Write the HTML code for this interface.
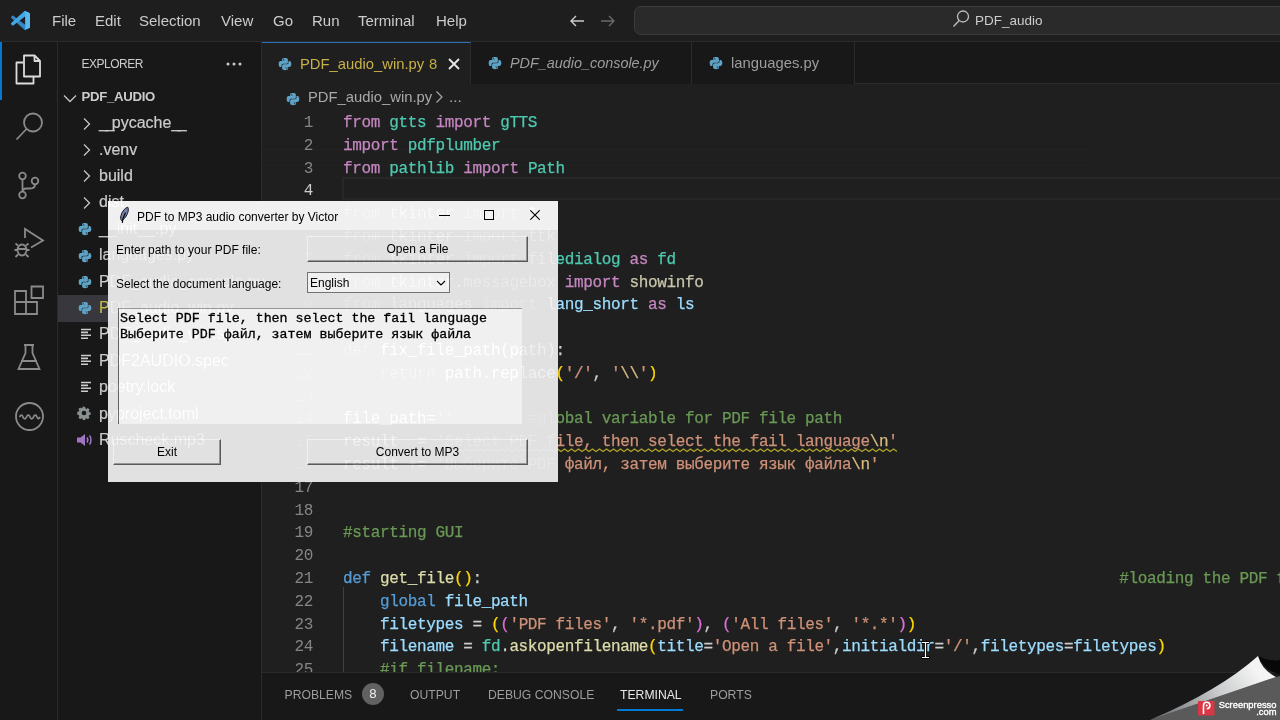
<!DOCTYPE html>
<html><head><meta charset="utf-8">
<style>
*{margin:0;padding:0;box-sizing:border-box}
html,body{width:1280px;height:720px;overflow:hidden;background:#1f1f1f;font-family:"Liberation Sans",sans-serif}
.abs{position:absolute}
#title{left:0;top:0;width:1280px;height:42px;background:#1e1e1e;border-bottom:1px solid #2b2b2b}
.menu{position:absolute;top:12px;font-size:15px;color:#cccccc;line-height:18px}
#act{left:0;top:42px;width:58px;height:678px;background:#181818;border-right:1px solid #2b2b2b}
#side{left:58px;top:42px;width:204px;height:678px;background:#181818;border-right:1px solid #2b2b2b}
#tabs{left:262px;top:42px;width:1018px;height:42px;background:#181818;border-bottom:1px solid #2b2b2b}
.tab{position:absolute;top:0;height:42px;background:#181818;border-right:1px solid #2b2b2b}
.tabtxt{position:absolute;top:12px;font-size:14.8px;line-height:18px;color:#9d9d9d;white-space:nowrap}
.row{position:absolute;left:0;width:203px;height:26px}
.rtxt{position:absolute;top:4px;font-size:16px;-webkit-text-stroke:0.2px currentColor;line-height:18px;color:#cccccc;white-space:nowrap}
#code{left:262px;top:108.6px;width:1018px;height:563px;overflow:hidden}
.ln{position:absolute;left:0;width:51px;text-align:right;font-family:"Liberation Mono",monospace;font-size:16px;letter-spacing:-0.36px;color:#858585;height:23px;line-height:23px}
.cl{position:absolute;left:81px;font-family:"Liberation Mono",monospace;font-size:16px;letter-spacing:-0.36px;color:#cccccc;white-space:pre;height:23px;line-height:23px}
.cl{-webkit-text-stroke:0.25px currentColor}
.k{color:#c586c0}.m{color:#4ec9b0}.d{color:#569cd6}.f{color:#dcdcaa}.v{color:#9cdcfe}.s{color:#ce9178}.c{color:#6a9955}.y{color:#ffd700}.p{color:#da70d6}.w{color:#d4d4d4}.e{color:#d7ba7d}
i{font-style:normal}
#panel{left:262px;top:672px;width:1018px;height:48px;background:#181818;border-top:1px solid #2b2b2b}
.ptab{position:absolute;top:14px;font-size:12.2px;margin-top:-2px;line-height:16px;color:#9d9d9d;white-space:nowrap}
.btn{background:#f0f0f0;border-top:1px solid #ffffff;border-left:1px solid #ffffff;border-right:1px solid #5f5f5f;border-bottom:1px solid #5f5f5f;box-shadow:inset -1px -1px 0 #a0a0a0;font-size:12px;line-height:24px;text-align:center;white-space:nowrap}
</style></head><body>
<div id="title" class="abs">
<svg class="abs" style="left:11px;top:11px" width="19" height="19" viewBox="0 0 100 100"><path fill="#2f86c8" d="M96.5 10.8 75.9 0.9c-2.4-1.2-5.2-0.7-7.1 1.2L29.5 38 12.4 25c-1.6-1.2-3.8-1.1-5.3 0.2L1.6 30.3c-1.8 1.7-1.8 4.5 0 6.2L16.4 50 1.6 63.5c-1.8 1.7-1.8 4.5 0 6.2l5.5 5c1.5 1.4 3.7 1.5 5.3 0.2L29.5 62l39.3 35.9c1.9 1.9 4.7 2.4 7.1 1.2l20.6-9.9c2.2-1 3.5-3.2 3.5-5.6V16.4c0-2.4-1.4-4.6-3.5-5.6zM75 72.7 45.2 50 75 27.3z"/><path fill="#45a6e6" d="M96.5 10.8 75.9 0.9c-2.4-1.2-5.2-0.7-7.1 1.2L1.6 63.5c-1.8 1.7-1.8 4.5 0 6.2l5.5 5c1.5 1.4 3.7 1.5 5.3 0.2L93.4 13.5C96.1 11.4 100 13.3 100 16.7v-0.2c0-2.4-1.4-4.6-3.5-5.7z"/><path fill="#5ab8f0" d="M75.9 99.1c-2.4 1.2-5.2 0.7-7.1-1.2C71.1 100.2 75 98.6 75 95.3V4.7c0-3.3-3.9-4.9-6.2-2.6 1.9-1.9 4.7-2.4 7.1-1.2l20.6 9.9c2.2 1 3.5 3.2 3.5 5.6v67.2c0 2.4-1.4 4.6-3.5 5.6z"/></svg>
<div class="menu" style="left:52px">File</div>
<div class="menu" style="left:95px">Edit</div>
<div class="menu" style="left:139px">Selection</div>
<div class="menu" style="left:221px">View</div>
<div class="menu" style="left:273px">Go</div>
<div class="menu" style="left:312px">Run</div>
<div class="menu" style="left:358px">Terminal</div>
<div class="menu" style="left:436px">Help</div>
<svg class="abs" style="left:568px;top:12px" width="18" height="18" viewBox="0 0 18 18"><path d="M16 9H3M8 4 3 9l5 5" fill="none" stroke="#cccccc" stroke-width="1.4"/></svg>
<svg class="abs" style="left:599px;top:12px" width="18" height="18" viewBox="0 0 18 18"><path d="M2 9h13M10 4l5 5-5 5" fill="none" stroke="#6b6b6b" stroke-width="1.4"/></svg>
<div class="abs" style="left:634px;top:6px;width:700px;height:29px;border:1px solid #3c3c3c;border-radius:7px;background:#2a2a2a"></div>
<svg class="abs" style="left:950.5px;top:9px" width="20" height="20" viewBox="0 0 20 20"><circle cx="12" cy="7.5" r="5.5" fill="none" stroke="#bdbdbd" stroke-width="1.3"/><path d="M8.2 11.5 2.5 17.5" stroke="#bdbdbd" stroke-width="1.4"/></svg>
<div class="abs" style="left:975px;top:13px;font-size:13.5px;line-height:16px;color:#cccccc">PDF_audio</div>
</div>
<div id="act" class="abs">
<div class="abs" style="left:0;top:0;width:2px;height:58px;background:#0078d4"></div>
<svg class="abs" style="left:0;top:0" width="57" height="420" viewBox="0 42 57 420">
<g fill="none" stroke="#dcdcdc" stroke-width="1.8" stroke-linejoin="round">
<path d="M23.5 62.5h-7v21h17v-6.5" stroke-linejoin="round"/>
<path d="M24 55.5h10.5l5.5 5.5v15.5h-16z"/><path d="M34.5 55.5v5.5h5.5"/>
</g>
<g fill="none" stroke="#8a8a8a" stroke-width="1.8">
<circle cx="33" cy="122.5" r="9"/><path d="M26.5 129 16.5 139.5"/>
<circle cx="22.5" cy="176" r="3.3"/><circle cx="35" cy="181" r="3.3"/><circle cx="22.5" cy="195" r="3.3"/>
<path d="M22.5 179.5v12M35 184.5c0 3-2 4-5 4h-3.5c-2.5 0-4 1.5-4 3.5"/>
<path d="M25 238v-9l18 11.5-12 7"/>
<ellipse cx="22" cy="250" rx="4.5" ry="5.5"/><path d="M17.5 250h-3M26.5 250h3M18 245.5l-2.5-2M26 245.5l2.5-2M18 254.5l-2.5 2.5M26 254.5l2.5 2.5M17.5 249h9"/>
<path d="M15 291h11v11h11v12H15zM15 302h11v12M31.5 286.5h11.5v11.5H31.5z"/>
<path d="M24 345h10M25.5 345v8l-7 16h21l-7-16v-8M21 361h16"/>
<circle cx="29.5" cy="416.5" r="13.5"/><path d="M19.5 417c1.5-2.5 2.5-2.5 3.5 0s2.5 2.5 3.5 0 2.5-2.5 3.5 0 2.5 2.5 3.5 0 2.5-2.5 3.5 0 2 2 3 0"/>
</g></svg>
</div>
<div id="side" class="abs">
<div class="abs" style="left:23.5px;top:14px;font-size:12px;line-height:16px;color:#cccccc;letter-spacing:-0.5px">EXPLORER</div>
<div class="abs" style="left:168px;top:19px;height:4px;line-height:0;color:#cccccc"><svg width="16" height="4" viewBox="0 0 16 4"><circle cx="2" cy="2" r="1.5" fill="#cccccc"/><circle cx="8" cy="2" r="1.5" fill="#cccccc"/><circle cx="14" cy="2" r="1.5" fill="#cccccc"/></svg></div>
<svg class="abs" style="left:5px;top:51px" width="14" height="10" viewBox="0 0 14 10"><path d="M1 2.5 7 8.5 13 2.5" fill="none" stroke="#c5c5c5" stroke-width="1.3"/></svg>
<div class="abs" style="left:23.5px;top:47px;font-size:13.2px;line-height:16px;font-weight:bold;color:#cccccc;letter-spacing:-0.3px">PDF_AUDIO</div>
<svg class="abs" style="left:24px;top:75px" width="10" height="14" viewBox="0 0 10 14"><path d="M2 1.5 7.5 7 2 12.5" fill="none" stroke="#c5c5c5" stroke-width="1.3"/></svg>
<div class="rtxt" style="left:41px;top:72.1px;color:#cccccc"><span style="letter-spacing:-2.5px">__</span>pycache<span style="letter-spacing:-2.5px">_</span>_</div>
<svg class="abs" style="left:24px;top:101px" width="10" height="14" viewBox="0 0 10 14"><path d="M2 1.5 7.5 7 2 12.5" fill="none" stroke="#c5c5c5" stroke-width="1.3"/></svg>
<div class="rtxt" style="left:41px;top:98.5px;color:#cccccc">.venv</div>
<svg class="abs" style="left:24px;top:127px" width="10" height="14" viewBox="0 0 10 14"><path d="M2 1.5 7.5 7 2 12.5" fill="none" stroke="#c5c5c5" stroke-width="1.3"/></svg>
<div class="rtxt" style="left:41px;top:124.9px;color:#cccccc">build</div>
<svg class="abs" style="left:24px;top:154px" width="10" height="14" viewBox="0 0 10 14"><path d="M2 1.5 7.5 7 2 12.5" fill="none" stroke="#c5c5c5" stroke-width="1.3"/></svg>
<div class="rtxt" style="left:41px;top:151.3px;color:#cccccc">dist</div>
<svg class="abs" style="left:19.5px;top:180px" width="14" height="14" viewBox="0 0 16 16"><path fill="#5ea3c6" d="M7.9 1C4.3 1 4.5 2.6 4.5 2.6v1.6h3.5v.5H3.1S.8 4.4.8 8c0 3.6 2 3.5 2 3.5h1.2V9.8s-.1-2 2-2h3.4s1.9 0 1.9-1.9V2.9S11.6 1 7.9 1zM6 2.1a.6.6 0 1 1 0 1.2.6.6 0 0 1 0-1.2z"/><path fill="#5ea3c6" d="M8.1 15c3.6 0 3.4-1.6 3.4-1.6v-1.6H8v-.5h4.9s2.3.3 2.3-3.3c0-3.6-2-3.5-2-3.5h-1.2v1.7s.1 2-2 2H6.6s-1.9 0-1.9 1.9v3.1S4.4 15 8.1 15zm1.9-1.1a.6.6 0 1 1 0-1.2.6.6 0 0 1 0 1.2z"/></svg>
<div class="rtxt" style="left:41px;top:177.7px;color:#cccccc">__init__.py</div>
<svg class="abs" style="left:19.5px;top:207px" width="14" height="14" viewBox="0 0 16 16"><path fill="#5ea3c6" d="M7.9 1C4.3 1 4.5 2.6 4.5 2.6v1.6h3.5v.5H3.1S.8 4.4.8 8c0 3.6 2 3.5 2 3.5h1.2V9.8s-.1-2 2-2h3.4s1.9 0 1.9-1.9V2.9S11.6 1 7.9 1zM6 2.1a.6.6 0 1 1 0 1.2.6.6 0 0 1 0-1.2z"/><path fill="#5ea3c6" d="M8.1 15c3.6 0 3.4-1.6 3.4-1.6v-1.6H8v-.5h4.9s2.3.3 2.3-3.3c0-3.6-2-3.5-2-3.5h-1.2v1.7s.1 2-2 2H6.6s-1.9 0-1.9 1.9v3.1S4.4 15 8.1 15zm1.9-1.1a.6.6 0 1 1 0-1.2.6.6 0 0 1 0 1.2z"/></svg>
<div class="rtxt" style="left:41px;top:204.1px;color:#cccccc">languages.py</div>
<svg class="abs" style="left:19.5px;top:233px" width="14" height="14" viewBox="0 0 16 16"><path fill="#5ea3c6" d="M7.9 1C4.3 1 4.5 2.6 4.5 2.6v1.6h3.5v.5H3.1S.8 4.4.8 8c0 3.6 2 3.5 2 3.5h1.2V9.8s-.1-2 2-2h3.4s1.9 0 1.9-1.9V2.9S11.6 1 7.9 1zM6 2.1a.6.6 0 1 1 0 1.2.6.6 0 0 1 0-1.2z"/><path fill="#5ea3c6" d="M8.1 15c3.6 0 3.4-1.6 3.4-1.6v-1.6H8v-.5h4.9s2.3.3 2.3-3.3c0-3.6-2-3.5-2-3.5h-1.2v1.7s.1 2-2 2H6.6s-1.9 0-1.9 1.9v3.1S4.4 15 8.1 15zm1.9-1.1a.6.6 0 1 1 0-1.2.6.6 0 0 1 0 1.2z"/></svg>
<div class="rtxt" style="left:41px;top:230.5px;color:#cccccc">PDF_audio_console.py</div>
<div class="abs" style="left:0;top:253.2px;width:203px;height:26.4px;background:#37373d"></div>
<svg class="abs" style="left:19.5px;top:259px" width="14" height="14" viewBox="0 0 16 16"><path fill="#5ea3c6" d="M7.9 1C4.3 1 4.5 2.6 4.5 2.6v1.6h3.5v.5H3.1S.8 4.4.8 8c0 3.6 2 3.5 2 3.5h1.2V9.8s-.1-2 2-2h3.4s1.9 0 1.9-1.9V2.9S11.6 1 7.9 1zM6 2.1a.6.6 0 1 1 0 1.2.6.6 0 0 1 0-1.2z"/><path fill="#5ea3c6" d="M8.1 15c3.6 0 3.4-1.6 3.4-1.6v-1.6H8v-.5h4.9s2.3.3 2.3-3.3c0-3.6-2-3.5-2-3.5h-1.2v1.7s.1 2-2 2H6.6s-1.9 0-1.9 1.9v3.1S4.4 15 8.1 15zm1.9-1.1a.6.6 0 1 1 0-1.2.6.6 0 0 1 0 1.2z"/></svg>
<div class="rtxt" style="left:41px;top:256.9px;color:#c3bc4a">PDF_audio_win.py</div>
<svg class="abs" style="left:22px;top:285px" width="14" height="14" viewBox="0 0 14 14"><path d="M1 2.5h10M1 5.4h7M1 8.3h10M1 11.2h7" stroke="#cccccc" stroke-width="1.6"/></svg>
<div class="rtxt" style="left:41px;top:283.3px;color:#cccccc">PDF_audio_win.spec</div>
<svg class="abs" style="left:22px;top:311px" width="14" height="14" viewBox="0 0 14 14"><path d="M1 2.5h10M1 5.4h7M1 8.3h10M1 11.2h7" stroke="#cccccc" stroke-width="1.6"/></svg>
<div class="rtxt" style="left:41px;top:309.7px;color:#cccccc">PDF2AUDIO.spec</div>
<svg class="abs" style="left:22px;top:338px" width="14" height="14" viewBox="0 0 14 14"><path d="M1 2.5h10M1 5.4h7M1 8.3h10M1 11.2h7" stroke="#cccccc" stroke-width="1.6"/></svg>
<div class="rtxt" style="left:41px;top:336.1px;color:#cccccc">poetry.lock</div>
<svg class="abs" style="left:19px;top:364px" width="14" height="14" viewBox="0 0 16 16"><path fill="#8a9090" d="M8 0.8l1.3.2.4 1.8 1.2.5 1.6-1 1.9 1.9-1 1.6.5 1.2 1.8.4v2.6l-1.8.4-.5 1.2 1 1.6-1.9 1.9-1.6-1-1.2.5-.4 1.8H6.7l-.4-1.8-1.2-.5-1.6 1-1.9-1.9 1-1.6-.5-1.2-1.8-.4V6.7l1.8-.4.5-1.2-1-1.6 1.9-1.9 1.6 1 1.2-.5.4-1.8zM8 5.3a2.7 2.7 0 1 0 0 5.4 2.7 2.7 0 0 0 0-5.4z"/></svg>
<div class="rtxt" style="left:41px;top:362.5px;color:#cccccc">pyproject.toml</div>
<svg class="abs" style="left:18px;top:391px" width="18" height="14" viewBox="0 0 18 14"><path fill="#a074c4" d="M1 4.5h3.5L9 1v12L4.5 9.5H1z"/><path d="M11 4.5c1 1.5 1 3.5 0 5M13.5 2.5c2 2.5 2 6.5 0 9" fill="none" stroke="#a074c4" stroke-width="1.5"/></svg>
<div class="rtxt" style="left:41px;top:388.9px;color:#cccccc">Ruscheck.mp3</div>
</div>
<div id="tabs" class="abs">
<div class="tab" style="left:0;width:209px;background:#1f1f1f;border-top:1px solid #2a72b5;height:42px">
<svg class="abs" style="left:16px;top:14px" width="14" height="14" viewBox="0 0 16 16"><path fill="#5ea3c6" d="M7.9 1C4.3 1 4.5 2.6 4.5 2.6v1.6h3.5v.5H3.1S.8 4.4.8 8c0 3.6 2 3.5 2 3.5h1.2V9.8s-.1-2 2-2h3.4s1.9 0 1.9-1.9V2.9S11.6 1 7.9 1zM6 2.1a.6.6 0 1 1 0 1.2.6.6 0 0 1 0-1.2z"/><path fill="#5ea3c6" d="M8.1 15c3.6 0 3.4-1.6 3.4-1.6v-1.6H8v-.5h4.9s2.3.3 2.3-3.3c0-3.6-2-3.5-2-3.5h-1.2v1.7s.1 2-2 2H6.6s-1.9 0-1.9 1.9v3.1S4.4 15 8.1 15zm1.9-1.1a.6.6 0 1 1 0-1.2.6.6 0 0 1 0 1.2z"/></svg>
<div class="tabtxt" style="left:38px;top:12px;color:#c9b24a">PDF_audio_win.py</div>
<div class="tabtxt" style="left:167px;top:12px;color:#c0b040">8</div>
<svg class="abs" style="left:185px;top:14px" width="14" height="14" viewBox="0 0 14 14"><path d="M2 2l10 10M12 2 2 12" stroke="#e8e8e8" stroke-width="1.8"/></svg>
</div>
<div class="tab" style="left:209px;width:221px">
<svg class="abs" style="left:17px;top:14px" width="14" height="14" viewBox="0 0 16 16"><path fill="#5ea3c6" d="M7.9 1C4.3 1 4.5 2.6 4.5 2.6v1.6h3.5v.5H3.1S.8 4.4.8 8c0 3.6 2 3.5 2 3.5h1.2V9.8s-.1-2 2-2h3.4s1.9 0 1.9-1.9V2.9S11.6 1 7.9 1zM6 2.1a.6.6 0 1 1 0 1.2.6.6 0 0 1 0-1.2z"/><path fill="#5ea3c6" d="M8.1 15c3.6 0 3.4-1.6 3.4-1.6v-1.6H8v-.5h4.9s2.3.3 2.3-3.3c0-3.6-2-3.5-2-3.5h-1.2v1.7s.1 2-2 2H6.6s-1.9 0-1.9 1.9v3.1S4.4 15 8.1 15zm1.9-1.1a.6.6 0 1 1 0-1.2.6.6 0 0 1 0 1.2z"/></svg>
<div class="tabtxt" style="left:39px;top:12px;font-style:italic;font-size:14.4px">PDF_audio_console.py</div>
</div>
<div class="tab" style="left:430px;width:163px">
<svg class="abs" style="left:17px;top:14px" width="14" height="14" viewBox="0 0 16 16"><path fill="#5ea3c6" d="M7.9 1C4.3 1 4.5 2.6 4.5 2.6v1.6h3.5v.5H3.1S.8 4.4.8 8c0 3.6 2 3.5 2 3.5h1.2V9.8s-.1-2 2-2h3.4s1.9 0 1.9-1.9V2.9S11.6 1 7.9 1zM6 2.1a.6.6 0 1 1 0 1.2.6.6 0 0 1 0-1.2z"/><path fill="#5ea3c6" d="M8.1 15c3.6 0 3.4-1.6 3.4-1.6v-1.6H8v-.5h4.9s2.3.3 2.3-3.3c0-3.6-2-3.5-2-3.5h-1.2v1.7s.1 2-2 2H6.6s-1.9 0-1.9 1.9v3.1S4.4 15 8.1 15zm1.9-1.1a.6.6 0 1 1 0-1.2.6.6 0 0 1 0 1.2z"/></svg>
<div class="tabtxt" style="left:39px;top:12px">languages.py</div>
</div>
</div>
<div class="abs" style="left:262px;top:84px;width:1018px;height:25px">
<svg class="abs" style="left:24px;top:8px" width="14" height="14" viewBox="0 0 16 16"><path fill="#5ea3c6" d="M7.9 1C4.3 1 4.5 2.6 4.5 2.6v1.6h3.5v.5H3.1S.8 4.4.8 8c0 3.6 2 3.5 2 3.5h1.2V9.8s-.1-2 2-2h3.4s1.9 0 1.9-1.9V2.9S11.6 1 7.9 1zM6 2.1a.6.6 0 1 1 0 1.2.6.6 0 0 1 0-1.2z"/><path fill="#5ea3c6" d="M8.1 15c3.6 0 3.4-1.6 3.4-1.6v-1.6H8v-.5h4.9s2.3.3 2.3-3.3c0-3.6-2-3.5-2-3.5h-1.2v1.7s.1 2-2 2H6.6s-1.9 0-1.9 1.9v3.1S4.4 15 8.1 15zm1.9-1.1a.6.6 0 1 1 0-1.2.6.6 0 0 1 0 1.2z"/></svg>
<div class="abs" style="left:46px;top:4px;font-size:14.8px;line-height:18px;color:#a9a9a9;white-space:nowrap">PDF_audio_win.py</div>
<svg class="abs" style="left:173px;top:6px" width="9" height="14" viewBox="0 0 9 14"><path d="M1.5 1.5 7 7l-5.5 5.5" fill="none" stroke="#a9a9a9" stroke-width="1.2"/></svg>
<div class="abs" style="left:187px;top:4px;font-size:15.5px;line-height:18px;color:#a9a9a9">...</div>
</div>
<div id="code" class="abs">
<div class="abs" style="left:80px;top:68.4px;width:940px;height:22.8px;border:2px solid #272727;border-right:none"></div>
<div class="abs" style="left:0;top:40px;width:826px;height:1px;background:#232323"></div>
<div class="abs" style="left:0;top:56px;width:826px;height:1px;background:#222222"></div>
<div class="abs" style="left:81px;top:250.8px;width:1px;height:22.8px;background:#404040"></div>
<div class="abs" style="left:81px;top:478.8px;width:1px;height:100px;background:#404040"></div>
<div class="ln" style="top:3.4px;color:#858585">1</div>
<div class="cl" style="top:3.4px"><i class="k">from</i> <i class="m">gtts</i> <i class="k">import</i> <i class="m">gTTS</i></div>
<div class="ln" style="top:26.2px;color:#858585">2</div>
<div class="cl" style="top:26.2px"><i class="k">import</i> <i class="m">pdfplumber</i></div>
<div class="ln" style="top:49.0px;color:#858585">3</div>
<div class="cl" style="top:49.0px"><i class="k">from</i> <i class="m">pathlib</i> <i class="k">import</i> <i class="m">Path</i></div>
<div class="ln" style="top:71.8px;color:#cccccc">4</div>
<div class="ln" style="top:94.6px;color:#858585">5</div>
<div class="cl" style="top:94.6px"><i class="k">from</i> <i class="m">tkinter</i> <i class="k">import</i> *</div>
<div class="ln" style="top:117.4px;color:#858585">6</div>
<div class="cl" style="top:117.4px"><i class="k">from</i> <i class="m">tkinter</i> <i class="k">import</i> <i class="m">ttk</i></div>
<div class="ln" style="top:140.2px;color:#858585">7</div>
<div class="cl" style="top:140.2px"><i class="k">from</i> <i class="m">tkinter</i> <i class="k">import</i> <i class="m">filedialog</i> <i class="k">as</i> <i class="m">fd</i></div>
<div class="ln" style="top:163.0px;color:#858585">8</div>
<div class="cl" style="top:163.0px"><i class="k">from</i> <i class="m">tkinter</i>.<i class="m">messagebox</i> <i class="k">import</i> <i style="color:#c9c5ad">showinfo</i></div>
<div class="ln" style="top:185.8px;color:#858585">9</div>
<div class="cl" style="top:185.8px"><i class="k">from</i> <i class="m">languages</i> <i class="k">import</i> <i class="v">lang_short</i> <i class="k">as</i> <i class="v">ls</i></div>
<div class="ln" style="top:208.6px;color:#858585">10</div>
<div class="ln" style="top:231.4px;color:#858585">11</div>
<div class="cl" style="top:231.4px"><i class="d">def</i> <i class="f">fix_file_path</i><i class="y">(</i><i class="v">path</i><i class="y">)</i>:</div>
<div class="ln" style="top:254.2px;color:#858585">12</div>
<div class="cl" style="top:254.2px">    <i class="k">return</i> <i class="v">path</i>.<i class="f">replace</i><i class="y">(</i><i class="s">'/'</i>, <i class="s">'</i><i class="e">\\</i><i class="s">'</i><i class="y">)</i></div>
<div class="ln" style="top:277.0px;color:#858585">13</div>
<div class="ln" style="top:299.8px;color:#858585">14</div>
<div class="cl" style="top:299.8px"><i class="v">file_path</i>=<i class="s">''</i>        <i class="c">#global variable for PDF file path</i></div>
<div class="ln" style="top:322.6px;color:#858585">15</div>
<div class="cl" style="top:322.6px"><i class="v">result</i>  = <i class="s sq">'Select PDF file, then select the fail language<i class="e">\n</i>'</i></div>
<div class="ln" style="top:345.4px;color:#858585">16</div>
<div class="cl" style="top:345.4px"><i class="v">result</i> += <i class="s">'Выберите PDF файл, затем выберите язык файла<i class="e">\n</i>'</i></div>
<div class="ln" style="top:368.2px;color:#858585">17</div>
<div class="ln" style="top:391.0px;color:#858585">18</div>
<div class="ln" style="top:413.8px;color:#858585">19</div>
<div class="cl" style="top:413.8px"><i class="c">#starting GUI</i></div>
<div class="ln" style="top:436.6px;color:#858585">20</div>
<div class="ln" style="top:459.4px;color:#858585">21</div>
<div class="cl" style="top:459.4px"><i class="d">def</i> <i class="f">get_file</i><i class="y">()</i>:                                                                     <i class="c">#loading the PDF file</i></div>
<div class="ln" style="top:482.2px;color:#858585">22</div>
<div class="cl" style="top:482.2px">    <i class="d">global</i> <i class="v">file_path</i></div>
<div class="ln" style="top:505.0px;color:#858585">23</div>
<div class="cl" style="top:505.0px">    <i class="v">filetypes</i> = <i class="y">(</i><i class="p">(</i><i class="s">'PDF files'</i>, <i class="s">'*.pdf'</i><i class="p">)</i>, <i class="p">(</i><i class="s">'All files'</i>, <i class="s">'*.*'</i><i class="p">)</i><i class="y">)</i></div>
<div class="ln" style="top:527.8px;color:#858585">24</div>
<div class="cl" style="top:527.8px">    <i class="v">filename</i> = <i class="m">fd</i>.<i class="f">askopenfilename</i><i class="y">(</i><i class="v">title</i>=<i class="s">'Open a file'</i>,<i class="v">initialdir</i>=<i class="s">'/'</i>,<i class="v">filetypes</i>=<i class="v">filetypes</i><i class="y">)</i></div>
<div class="ln" style="top:550.6px;color:#858585">25</div>
<div class="cl" style="top:550.6px">    <i class="c">#if filename:</i></div>
<div class="ln" style="top:573.4px;color:#858585">26</div>
<div class="cl" style="top:573.4px">        <i class="v">file_path</i> = <i class="v">filename</i></div>
</div>
<div id="panel" class="abs">
<div class="ptab" style="left:22.5px;top:16px">PROBLEMS</div>
<div class="abs" style="left:100px;top:10px;width:22px;height:22px;border-radius:11px;background:#616161;color:#f0f0f0;font-size:13.2px;line-height:22px;text-align:center">8</div>
<div class="ptab" style="left:148px;top:16px">OUTPUT</div>
<div class="ptab" style="left:226px;top:16px">DEBUG CONSOLE</div>
<div class="ptab" style="left:358px;top:16px;color:#e7e7e7">TERMINAL</div>
<div class="abs" style="left:355px;top:36px;width:66px;height:1.5px;background:#0078d4"></div>
<div class="ptab" style="left:448px;top:16px">PORTS</div>
</div>
<svg class="abs" style="left:0;top:0" width="1280" height="720"><path d="M435 451.5 L438.5 449 L442.0 451.5 L445.5 449 L449.0 451.5 L452.5 449 L456.0 451.5 L459.5 449 L463.0 451.5 L466.5 449 L470.0 451.5 L473.5 449 L477.0 451.5 L480.5 449 L484.0 451.5 L487.5 449 L491.0 451.5 L494.5 449 L498.0 451.5 L501.5 449 L505.0 451.5 L508.5 449 L512.0 451.5 L515.5 449 L519.0 451.5 L522.5 449 L526.0 451.5 L529.5 449 L533.0 451.5 L536.5 449 L540.0 451.5 L543.5 449 L547.0 451.5 L550.5 449 L554.0 451.5 L557.5 449 L561.0 451.5 L564.5 449 L568.0 451.5 L571.5 449 L575.0 451.5 L578.5 449 L582.0 451.5 L585.5 449 L589.0 451.5 L592.5 449 L596.0 451.5 L599.5 449 L603.0 451.5 L606.5 449 L610.0 451.5 L613.5 449 L617.0 451.5 L620.5 449 L624.0 451.5 L627.5 449 L631.0 451.5 L634.5 449 L638.0 451.5 L641.5 449 L645.0 451.5 L648.5 449 L652.0 451.5 L655.5 449 L659.0 451.5 L662.5 449 L666.0 451.5 L669.5 449 L673.0 451.5 L676.5 449 L680.0 451.5 L683.5 449 L687.0 451.5 L690.5 449 L694.0 451.5 L697.5 449 L701.0 451.5 L704.5 449 L708.0 451.5 L711.5 449 L715.0 451.5 L718.5 449 L722.0 451.5 L725.5 449 L729.0 451.5 L732.5 449 L736.0 451.5 L739.5 449 L743.0 451.5 L746.5 449 L750.0 451.5 L753.5 449 L757.0 451.5 L760.5 449 L764.0 451.5 L767.5 449 L771.0 451.5 L774.5 449 L778.0 451.5 L781.5 449 L785.0 451.5 L788.5 449 L792.0 451.5 L795.5 449 L799.0 451.5 L802.5 449 L806.0 451.5 L809.5 449 L813.0 451.5 L816.5 449 L820.0 451.5 L823.5 449 L827.0 451.5 L830.5 449 L834.0 451.5 L837.5 449 L841.0 451.5 L844.5 449 L848.0 451.5 L851.5 449 L855.0 451.5 L858.5 449 L862.0 451.5 L865.5 449 L869.0 451.5 L872.5 449 L876.0 451.5 L879.5 449 L883.0 451.5 L886.5 449 L890.0 451.5 L893.5 449 L897.0 451.5" fill="none" stroke="#b3a52a" stroke-width="1.1"/></svg>
<svg class="abs" style="left:915px;top:636px" width="20" height="28" viewBox="915 636 20 28"><path d="M921.5 642.5h8M925.5 642.5v15M921.5 657.5h8" stroke="#000" stroke-width="3"/><path d="M922 642.5h7M925.5 642.5v15M922 657.5h7" stroke="#fff" stroke-width="1.2"/></svg>
<svg class="abs" style="left:1140px;top:640px" width="140" height="80" viewBox="1140 640 140 80">
<defs><linearGradient id="cg" x1="1250" y1="662" x2="1170" y2="715" gradientUnits="userSpaceOnUse"><stop offset="0" stop-color="#f4f4f4"/><stop offset="0.45" stop-color="#c9cbcc"/><stop offset="1" stop-color="#7d8082"/></linearGradient></defs>
<path d="M1258 656 Q1266 672 1280 674 L1280 660 Q1270 662 1258 656Z" fill="#080808"/>
<path d="M1150 720 L1276 677 L1280 676 L1280 720Z" fill="#5a5a5a"/>
<path d="M1150 720 Q1220 690 1258 656 Q1262 670 1276 677Z" fill="url(#cg)"/>
<rect x="1198" y="701" width="16.5" height="14.5" fill="#d93743"/>
<path d="M1203.5 714V705.5a3.2 3.2 0 1 1 3.2 3.2" fill="none" stroke="#fff" stroke-width="1.6"/><circle cx="1206.7" cy="705.5" r="1" fill="#fff"/>
<text x="1276.5" y="708" text-anchor="end" font-family="Liberation Sans" font-size="9.4" fill="#ffffff" stroke="#ffffff" stroke-width="0.35">Screenpresso</text>
<text x="1276.5" y="715" text-anchor="end" font-family="Liberation Sans" font-size="9.4" fill="#ffffff" stroke="#ffffff" stroke-width="0.35">.com</text>
</svg>
<div class="abs" style="left:108px;top:201px;width:450px;height:281px;backdrop-filter:grayscale(1) brightness(0.85) contrast(3)"></div>
<div id="dlg" class="abs" style="left:108px;top:201px;width:450px;height:281px;background:#f0f0f0;opacity:0.94;font-family:'Liberation Sans',sans-serif;color:#000">
<div class="abs" style="left:0;top:0;width:450px;height:29px;background:#ffffff"></div>
<svg class="abs" style="left:10px;top:5px" width="12" height="18" viewBox="0 0 12 18"><path d="M9.8 1.2C7 2 4.2 5 3 9.5 2.4 11.5 2.6 13.5 3.4 14.5 5.5 14 8 11 9.5 7.5 10.5 5 10.6 2.5 9.8 1.2z" fill="#7d8db0" stroke="#15152a" stroke-width="1"/><path d="M4.3 17 5 12.5 7.5 6.5" fill="none" stroke="#000" stroke-width="1.1"/></svg>
<div class="abs" style="left:29px;top:8.5px;font-size:12px;line-height:15px;white-space:nowrap">PDF to MP3 audio converter by Victor</div>
<div class="abs" style="left:331px;top:14px;width:11px;height:1px;background:#000"></div>
<div class="abs" style="left:376px;top:9px;width:10px;height:10px;border:1px solid #000"></div>
<svg class="abs" style="left:422px;top:9px" width="10" height="10" viewBox="0 0 10 10"><path d="M.3.3l9.4 9.4M9.7.3l-9.4 9.4" stroke="#000" stroke-width="1.1"/></svg>
<div class="abs" style="left:8px;top:42px;font-size:12px;line-height:15px;white-space:nowrap">Enter path to your PDF file:</div>
<div class="abs btn" style="left:199px;top:35px;width:221px;height:26px">Open a File</div>
<div class="abs" style="left:8px;top:76px;font-size:12px;line-height:15px;white-space:nowrap">Select the document language:</div>
<div class="abs" style="left:199px;top:71px;width:143px;height:21px;border:1px solid #7a7a7a;background:#ffffff;font-size:12px;line-height:21px;padding-left:2px">English</div>
<svg class="abs" style="left:328px;top:79px" width="10" height="6" viewBox="0 0 10 6"><path d="M1 1l4 4 4-4" fill="none" stroke="#000" stroke-width="1.1"/></svg>
<div class="abs" style="left:10px;top:107px;width:404px;height:116px;background:#ffffff;border-left:1px solid #696969;border-top:1px solid #a0a0a0;font-family:'Liberation Mono',monospace;font-size:13.3px;line-height:16px;padding:2px 0 0 1px;white-space:pre;-webkit-text-stroke:0.3px #000">Select PDF file, then select the fail language
Выберите PDF файл, затем выберите язык файла</div>
<div class="abs btn" style="left:5px;top:238px;width:108px;height:26px">Exit</div>
<div class="abs btn" style="left:199px;top:238px;width:221px;height:26px">Convert to MP3</div>
</div>
</body></html>
